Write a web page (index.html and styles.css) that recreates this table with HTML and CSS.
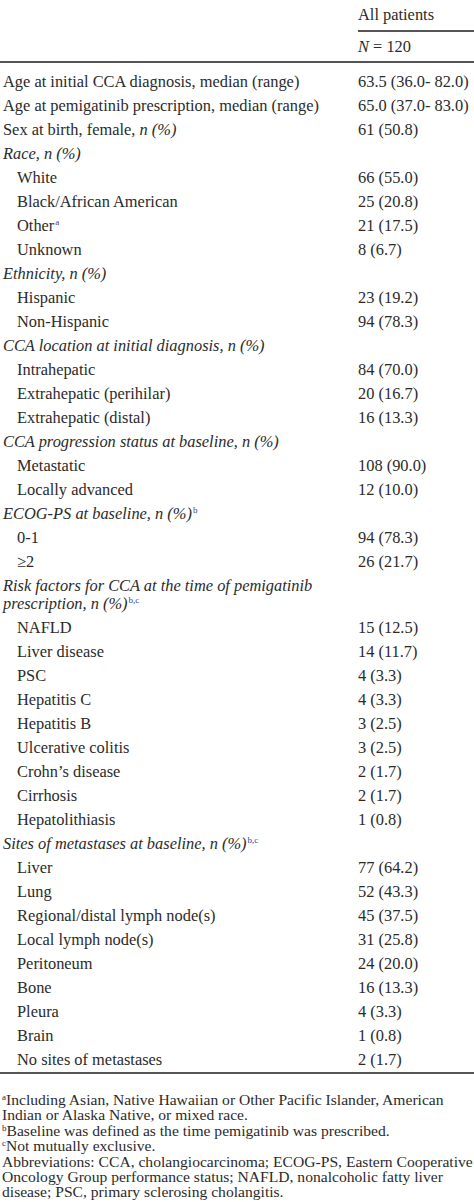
FILE: index.html
```html
<!DOCTYPE html>
<html lang="en">
<head>
<meta charset="utf-8">
<title>Patient characteristics</title>
<link rel="stylesheet" href="styles.css">
</head>
<body>
<div class="page">
  <table class="chars">
    <thead>
      <tr class="head-1">
        <th class="lab"></th>
        <th class="val">All patients</th>
      </tr>
      <tr class="head-2">
        <th class="lab"></th>
        <th class="val"><i>N</i> = 120</th>
      </tr>
    </thead>
    <tbody>
      <tr class="first"><td class="lab">Age at initial CCA diagnosis, median (range)</td><td class="val">63.5 (36.0- 82.0)</td></tr>
      <tr><td class="lab">Age at pemigatinib prescription, median (range)</td><td class="val">65.0 (37.0- 83.0)</td></tr>
      <tr><td class="lab">Sex at birth, female, <i>n (%)</i></td><td class="val">61 (50.8)</td></tr>
      <tr><td class="lab sec">Race, n (%)</td><td class="val"></td></tr>
      <tr><td class="lab sub">White</td><td class="val">66 (55.0)</td></tr>
      <tr><td class="lab sub">Black/African American</td><td class="val">25 (20.8)</td></tr>
      <tr><td class="lab sub">Other<sup class="ref">a</sup></td><td class="val">21 (17.5)</td></tr>
      <tr><td class="lab sub">Unknown</td><td class="val">8 (6.7)</td></tr>
      <tr><td class="lab sec">Ethnicity, n (%)</td><td class="val"></td></tr>
      <tr><td class="lab sub">Hispanic</td><td class="val">23 (19.2)</td></tr>
      <tr><td class="lab sub">Non-Hispanic</td><td class="val">94 (78.3)</td></tr>
      <tr><td class="lab sec">CCA location at initial diagnosis, n (%)</td><td class="val"></td></tr>
      <tr><td class="lab sub">Intrahepatic</td><td class="val">84 (70.0)</td></tr>
      <tr><td class="lab sub">Extrahepatic (perihilar)</td><td class="val">20 (16.7)</td></tr>
      <tr><td class="lab sub">Extrahepatic (distal)</td><td class="val">16 (13.3)</td></tr>
      <tr><td class="lab sec">CCA progression status at baseline, n (%)</td><td class="val"></td></tr>
      <tr><td class="lab sub">Metastatic</td><td class="val">108 (90.0)</td></tr>
      <tr><td class="lab sub">Locally advanced</td><td class="val">12 (10.0)</td></tr>
      <tr><td class="lab sec">ECOG-PS at baseline, n (%)<sup class="ref">b</sup></td><td class="val"></td></tr>
      <tr><td class="lab sub">0-1</td><td class="val">94 (78.3)</td></tr>
      <tr><td class="lab sub">≥2</td><td class="val">26 (21.7)</td></tr>
      <tr><td class="lab sec wrap">Risk factors for CCA at the time of pemigatinib prescription, n (%)<sup class="ref">b,c</sup></td><td class="val"></td></tr>
      <tr><td class="lab sub">NAFLD</td><td class="val">15 (12.5)</td></tr>
      <tr><td class="lab sub">Liver disease</td><td class="val">14 (11.7)</td></tr>
      <tr><td class="lab sub">PSC</td><td class="val">4 (3.3)</td></tr>
      <tr><td class="lab sub">Hepatitis C</td><td class="val">4 (3.3)</td></tr>
      <tr><td class="lab sub">Hepatitis B</td><td class="val">3 (2.5)</td></tr>
      <tr><td class="lab sub">Ulcerative colitis</td><td class="val">3 (2.5)</td></tr>
      <tr><td class="lab sub">Crohn’s disease</td><td class="val">2 (1.7)</td></tr>
      <tr><td class="lab sub">Cirrhosis</td><td class="val">2 (1.7)</td></tr>
      <tr><td class="lab sub">Hepatolithiasis</td><td class="val">1 (0.8)</td></tr>
      <tr><td class="lab sec">Sites of metastases at baseline, n (%)<sup class="ref">b,c</sup></td><td class="val"></td></tr>
      <tr><td class="lab sub">Liver</td><td class="val">77 (64.2)</td></tr>
      <tr><td class="lab sub">Lung</td><td class="val">52 (43.3)</td></tr>
      <tr><td class="lab sub">Regional/distal lymph node(s)</td><td class="val">45 (37.5)</td></tr>
      <tr><td class="lab sub">Local lymph node(s)</td><td class="val">31 (25.8)</td></tr>
      <tr><td class="lab sub">Peritoneum</td><td class="val">24 (20.0)</td></tr>
      <tr><td class="lab sub">Bone</td><td class="val">16 (13.3)</td></tr>
      <tr><td class="lab sub">Pleura</td><td class="val">4 (3.3)</td></tr>
      <tr><td class="lab sub">Brain</td><td class="val">1 (0.8)</td></tr>
      <tr class="last"><td class="lab sub">No sites of metastases</td><td class="val">2 (1.7)</td></tr>
    </tbody>
  </table>
  <div class="notes">
    <p><sup class="mark">a</sup>Including Asian, Native Hawaiian or Other Pacific Islander, American Indian or Alaska Native, or mixed race.</p>
    <p><sup class="mark">b</sup>Baseline was defined as the time pemigatinib was prescribed.</p>
    <p><sup class="mark">c</sup>Not mutually exclusive.</p>
    <p>Abbreviations: CCA, cholangiocarcinoma; ECOG-PS, Eastern Cooperative Oncology Group performance status; NAFLD, nonalcoholic fatty liver disease; PSC, primary sclerosing cholangitis.</p>
  </div>
</div>
</body>
</html>
```
FILE: styles.css
```css
html, body {
  margin: 0;
  padding: 0;
  background: #ffffff;
}

body {
  width: 474px;
  overflow: hidden;
  font-family: "Liberation Serif", "Times New Roman", serif;
  color: #2b2b2b;
}

.page {
  width: 520px;
}

.chars {
  border-collapse: collapse;
  width: 520px;
  font-size: 16.4px;
  table-layout: fixed;
}

.chars th,
.chars td {
  padding: 0;
  text-align: left;
  font-weight: normal;
  vertical-align: middle;
  line-height: 24px;
  white-space: nowrap;
}

.chars .lab {
  width: 355px;
  padding-left: 3px;
}

.chars .val {
  padding-left: 0;
}

.head-1 th {
  height: 30px;
}

.head-1 .val {
  border-bottom: 2px solid #555555;
}

.head-2 th {
  height: 29px;
  border-bottom: 2px solid #555555;
}

.first td {
  padding-top: 7px;
}

.last td {
  border-bottom: 2px solid #555555;
}

.sec {
  font-style: italic;
}

.sub {
  padding-left: 17px !important;
}

.wrap {
  white-space: normal !important;
  line-height: 18px !important;
  padding-top: 3px !important;
  padding-bottom: 3px !important;
}

.ref {
  color: #3a3ab8;
  font-style: normal;
  font-size: 9px;
  line-height: 0;
  vertical-align: 6px;
  margin-left: 1px;
}

.notes {
  width: 474px;
  padding: 18px 0 0 2px;
  font-size: 15.6px;
  line-height: 15.4px;
}

.notes p {
  margin: 0;
}

.mark {
  font-size: 9px;
  line-height: 0;
  vertical-align: 5px;
}
```
